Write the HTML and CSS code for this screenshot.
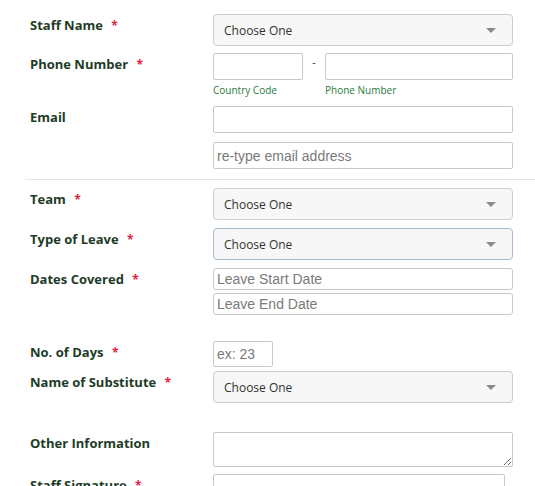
FILE: index.html
```html
<!DOCTYPE html>
<html lang="en">
<head>
<meta charset="utf-8">
<title>Leave Form</title>
<link rel="stylesheet" href="styles.css">
</head>
<body>
<form class="form">
  <div class="row row-staff">
    <label class="lbl">Staff Name <span class="req">*</span></label>
    <div class="field select-wrap"><select class="select"><option>Choose One</option></select></div>
  </div>

  <div class="row row-phone">
    <label class="lbl">Phone Number <span class="req">*</span></label>
    <div class="field">
      <div class="phone">
        <div class="phone-col cc">
          <input class="inp inp-cc" type="text">
          <span class="cap">Country Code</span>
        </div>
        <span class="dash">-</span>
        <div class="phone-col pn">
          <input class="inp inp-pn" type="text">
          <span class="cap">Phone Number</span>
        </div>
      </div>
    </div>
  </div>

  <div class="row row-email">
    <label class="lbl">Email</label>
    <div class="field stack stack-email">
      <input class="inp inp-full" type="text">
      <input class="inp inp-full" type="text" placeholder="re-type email address">
    </div>
  </div>

  <hr class="sep">

  <div class="row row-team">
    <label class="lbl">Team <span class="req">*</span></label>
    <div class="field select-wrap"><select class="select"><option>Choose One</option></select></div>
  </div>

  <div class="row row-type">
    <label class="lbl">Type of Leave <span class="req">*</span></label>
    <div class="field select-wrap"><select class="select select-focus"><option>Choose One</option></select></div>
  </div>

  <div class="row row-dates">
    <label class="lbl">Dates Covered <span class="req">*</span></label>
    <div class="field stack stack-dates">
      <input class="inp inp-date" type="text" placeholder="Leave Start Date">
      <input class="inp inp-date" type="text" placeholder="Leave End Date">
    </div>
  </div>

  <div class="row row-days">
    <label class="lbl">No. of Days <span class="req">*</span></label>
    <div class="field"><input class="inp inp-days" type="text" placeholder="ex: 23"></div>
  </div>

  <div class="row row-sub">
    <label class="lbl">Name of Substitute <span class="req">*</span></label>
    <div class="field select-wrap"><select class="select"><option>Choose One</option></select></div>
  </div>

  <div class="row row-other">
    <label class="lbl">Other Information</label>
    <div class="field"><textarea class="ta"></textarea></div>
  </div>

  <div class="row row-sig">
    <label class="lbl">Staff Signature <span class="req">*</span></label>
    <div class="field"><input class="inp inp-sig" type="text"></div>
  </div>
</form>
</body>
</html>
```

FILE: styles.css
```css
html, body {
  margin: 0;
  padding: 0;
  background: #fff;
  overflow: hidden;
}
body {
  font-family: "Open Sans", "Liberation Sans", sans-serif;
}
.form {
  padding-top: 14px;
}
.row {
  display: grid;
  grid-template-columns: 183px 300px;
  padding-left: 30px;
  align-items: start;
}
.lbl {
  font-weight: 700;
  font-size: 13px;
  line-height: 18px;
  color: #1e3b27;
  padding-top: 2px;
  white-space: nowrap;
}
.req {
  color: #e0213f;
  margin-left: 5px;
  font-size: 12px;
}
.select-wrap {
  position: relative;
}
.select-wrap::after {
  content: "";
  position: absolute;
  right: 17px;
  top: 14px;
  border-left: 5px solid transparent;
  border-right: 5px solid transparent;
  border-top: 5px solid #8a8a8a;
  pointer-events: none;
}
.select {
  -webkit-appearance: none;
  appearance: none;
  display: block;
  width: 300px;
  height: 32px;
  box-sizing: border-box;
  border: 1px solid #cccccc;
  border-radius: 4px;
  background: #f7f7f7;
  font-family: "Open Sans", sans-serif;
  font-size: 12px;
  color: #333;
  padding: 0 10px;
  outline: none;
}
.select-focus {
  border-color: #a7b9d3;
}
.inp {
  display: block;
  box-sizing: border-box;
  border: 1px solid #c8c8c8;
  border-radius: 2px;
  background: #fff;
  font-family: "Liberation Sans", Arial, sans-serif;
  font-size: 14px;
  color: #333;
  padding: 0 3px;
  margin: 0;
  outline: none;
}
.inp::placeholder {
  color: #7a7a7a;
}
.inp-full {
  width: 300px;
  height: 27px;
}
.phone {
  display: flex;
  align-items: flex-start;
}
.phone-col {
  display: flex;
  flex-direction: column;
}
.inp-cc {
  width: 90px;
  height: 27px;
}
.inp-pn {
  width: 188px;
  height: 27px;
}
.dash {
  width: 22px;
  text-align: center;
  font-size: 11px;
  line-height: 18px;
  color: #333;
}
.cap {
  font-size: 10px;
  line-height: 14px;
  margin-top: 3px;
  color: #2a7a3c;
}
.stack {
  display: flex;
  flex-direction: column;
}
.stack-email {
  gap: 9px;
}
.stack-dates {
  gap: 3px;
}
.inp-date {
  width: 300px;
  height: 22px;
  border-radius: 3px;
}
.inp-days {
  width: 60px;
  height: 26px;
}
.ta {
  display: block;
  box-sizing: border-box;
  width: 300px;
  height: 35px;
  border: 1px solid #c8c8c8;
  border-radius: 2px;
  margin: 0;
  padding: 2px 3px;
  resize: vertical;
  outline: none;
}
.inp-sig {
  width: 292px;
  height: 27px;
}
.sep {
  border: 0;
  border-top: 1px solid #e3e3e3;
  margin: 10px 0 8px 25px;
  height: 0;
}
.row-staff { margin-bottom: 7px; }
.row-phone { margin-bottom: 9px; }
.row-team { margin-bottom: 8px; }
.row-type { margin-bottom: 8px; }
.row-dates { margin-bottom: 26px; }
.row-days { margin-bottom: 4px; }
.row-sub { margin-bottom: 29px; }
.row-other { margin-bottom: 7px; }
```
